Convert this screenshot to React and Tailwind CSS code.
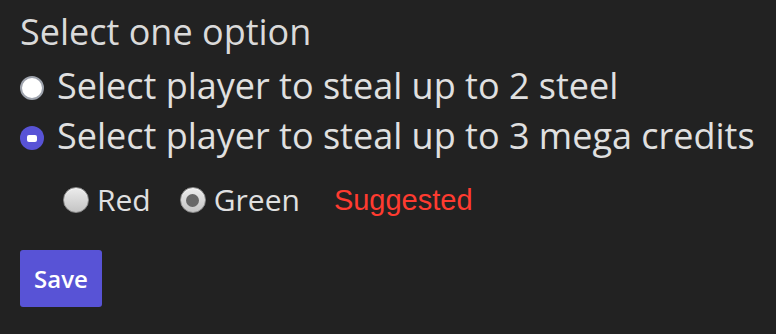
import React from "react";

function MainRadio({ checked }) {
  if (checked) {
    return (
      <span className="mt-[4px] mr-[13px] flex h-[24px] w-[24px] shrink-0 items-center justify-center rounded-full bg-[#5853d6]">
        <span className="h-[7px] w-[10px] rounded-[2px] bg-white" />
      </span>
    );
  }
  return (
    <span className="mt-[4px] mr-[13px] h-[24px] w-[24px] shrink-0 rounded-full border-[2px] border-[#9ea3ad] bg-white" />
  );
}

function SmallRadio({ checked }) {
  return (
    <span className="flex h-[26px] w-[26px] shrink-0 items-center justify-center rounded-full border border-[#8c8c8c] bg-gradient-to-b from-[#ececec] to-[#c4c4c4] shadow-[inset_0_1px_1px_rgba(255,255,255,0.6)]">
      {checked && <span className="h-[13px] w-[13px] rounded-full bg-[#676767]" />}
    </span>
  );
}

export default function App() {
  const options = [
    { label: "Select player to steal up to 2 steel", checked: false },
    { label: "Select player to steal up to 3 mega credits", checked: true },
  ];

  return (
    <div className="min-h-screen bg-[#222222] px-[20px] pt-[6px] font-['Open_Sans',sans-serif] font-medium text-[#e0e0e0]">
      <div className="text-[36px] leading-[52px] text-[#dadada]">Select one option</div>

      <div className="mt-[3px]">
        {options.map((o) => (
          <label key={o.label} className="flex items-center whitespace-nowrap text-[36px] leading-[50px]">
            <MainRadio checked={o.checked} />
            <span>{o.label}</span>
          </label>
        ))}
      </div>

      <div className="mt-[19px] flex h-[40px] items-center pl-[43px]">
        <label className="flex items-center">
          <SmallRadio />
          <span className="ml-[8px] text-[30px] leading-[40px]">Red</span>
        </label>
        <label className="ml-[29px] flex items-center">
          <SmallRadio checked />
          <span className="ml-[8px] text-[30px] leading-[40px]">Green</span>
        </label>
        <span className="ml-[34px] font-['Liberation_Sans',Arial,sans-serif] text-[29px] font-normal leading-[40px] text-[#ff3b30]">
          Suggested
        </span>
      </div>

      <button
        type="submit"
        className="mt-[30px] flex h-[57px] w-[82px] items-center justify-center rounded-[3px] bg-[#5853d6] text-[24px] font-semibold text-white"
      >
        Save
      </button>
    </div>
  );
}
